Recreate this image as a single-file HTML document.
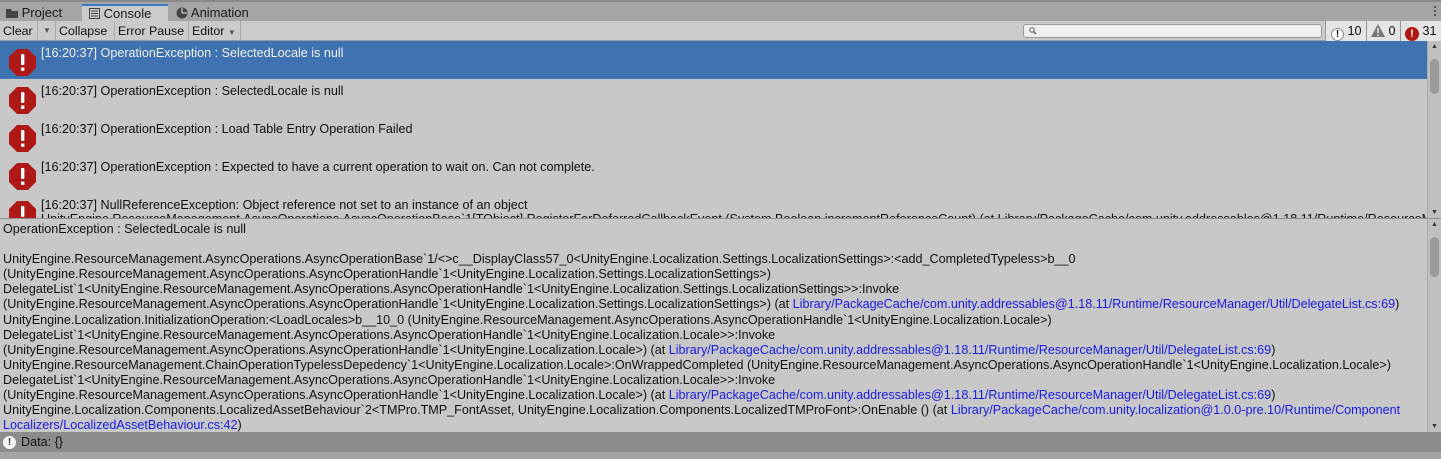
<!DOCTYPE html>
<html><head><style>
*{margin:0;padding:0;box-sizing:border-box}
body{width:1441px;height:459px;overflow:hidden;background:#a5a5a5;font-family:"Liberation Sans",sans-serif;font-size:12.6px;color:#101010;position:relative}
.abs{position:absolute}
.tabs{left:0;top:0;width:1441px;height:21px;background:#a5a5a5;border-top:2px solid #8a8a8a}
.tab{position:absolute;top:2px;height:19px;line-height:18px;font-size:13px;color:#1a1a1a;white-space:nowrap}
.tb{left:0;top:21px;width:1441px;height:20px;background:#cbcbcb;border-bottom:1px solid #999}
.btn{position:absolute;top:0;height:20px;line-height:20px;padding:0 3px;border-right:1px solid #aaa;font-size:12.4px;white-space:nowrap;overflow:hidden}
.list{left:0;top:41px;width:1427px;height:177px;background:#c8c8c8;overflow:hidden}
.row{position:absolute;left:0;width:1427px;height:38px;white-space:nowrap}
.row span{position:absolute;left:41px;top:5px}
.ic{position:absolute;left:9px;top:8px;width:27px;height:27px}
.det{left:0;top:219px;width:1427px;height:213px;background:#c8c8c8;overflow:hidden;white-space:nowrap;line-height:15.1px;padding:3px 0 0 3px}
a{color:#1a1ae8;text-decoration:none}
.sb{background:#c0c0c0;border-left:1px solid #aaa}
</style></head><body>
<div class="abs tabs">
 <div class="tab" style="left:0;width:82px;padding-left:6px"><svg width="12" height="10" style="vertical-align:-1px"><path d="M0 1h5l1 2h6v7H0z" fill="#444"/></svg> Project</div>
 <div class="tab" style="left:82px;width:86px;background:#cbcbcb;border-top:2px solid #3a79c8;top:2px;padding-left:7px;line-height:16px"><svg width="11" height="11" style="vertical-align:-1px"><rect x="0.5" y="0.5" width="10" height="10" fill="none" stroke="#444"/><path d="M2 3h7M2 5.5h7M2 8h7" stroke="#444"/></svg> Console</div>
 <div class="tab" style="left:176px;padding-left:0"><svg width="12" height="12" style="vertical-align:-2px"><circle cx="6" cy="6" r="5.5" fill="#444"/><path d="M6 6V1M6 6h5" stroke="#ccc" stroke-width="1.2"/></svg> Animation</div>
 <div class="abs" style="right:5px;top:4px;width:2px;height:10px;background:repeating-linear-gradient(#555 0 2px,transparent 2px 4px)"></div>
</div>
<div class="abs tb">
 <div class="btn" style="left:0;width:38px">Clear</div>
 <div class="btn" style="left:38px;width:18px;font-size:8px;color:#555;padding-left:5px">▼</div>
 <div class="btn" style="left:56px;width:59px">Collapse</div>
 <div class="btn" style="left:115px;width:74px">Error Pause</div>
 <div class="btn" style="left:189px;width:52px">Editor <span style="font-size:8px;color:#555">▼</span></div>
 <div class="abs" style="left:1023px;top:3px;width:299px;height:14px;background:#efefef;border:1px solid #999;border-radius:3px"><svg width="8" height="8" style="position:absolute;left:5px;top:2px"><circle cx="3" cy="3" r="2.2" fill="none" stroke="#555"/><path d="M4.5 4.5L7 7" stroke="#555" stroke-width="1.3"/></svg></div>
 <div class="abs" style="left:1325px;top:0;width:41px;height:20px;background:#e4e4e4;border-left:1px solid #999;line-height:20px;padding-left:5px"><span style="display:inline-block;width:13px;height:13px;border-radius:50%;border:1px solid #888;background:#fff;font-size:10px;text-align:center;line-height:11px;font-weight:bold;vertical-align:-2px">!</span> 10</div>
 <div class="abs" style="left:1366px;top:0;width:34px;height:20px;background:#e4e4e4;border-left:1px solid #999;line-height:20px;padding-left:4px"><svg width="14" height="13" style="vertical-align:-2px"><path d="M7 0L14 13H0z" fill="#777"/><path d="M7 4v5M7 10.5v1.5" stroke="#eee" stroke-width="1.5"/></svg> 0</div>
 <div class="abs" style="left:1400px;top:0;width:41px;height:20px;background:#e4e4e4;border-left:1px solid #999;line-height:20px;padding-left:4px"><span style="display:inline-block;width:14px;height:14px;border-radius:50%;background:#b31515;color:#fff;font-size:11px;text-align:center;line-height:14px;font-weight:bold;vertical-align:-2px">!</span> 31</div>
</div>
<svg width="0" height="0" style="position:absolute"><defs><g id="e"><polygon points="8,0 19,0 27,8 27,19 19,27 8,27 0,19 0,8" fill="#b01717"/><rect x="12" y="5" width="3.4" height="11" rx="1" fill="#fff"/><rect x="12" y="18.5" width="3.4" height="3.4" fill="#fff"/></g></defs></svg>
<div class="abs list">
 <div class="row" style="top:0;background:#3e72b0;color:#f0f0f0"><svg class="ic"><use href="#e"/></svg><span>[16:20:37] OperationException : SelectedLocale is null</span></div>
 <div class="row" style="top:38px"><svg class="ic"><use href="#e"/></svg><span>[16:20:37] OperationException : SelectedLocale is null</span></div>
 <div class="row" style="top:76px"><svg class="ic"><use href="#e"/></svg><span>[16:20:37] OperationException : Load Table Entry Operation Failed</span></div>
 <div class="row" style="top:114px"><svg class="ic"><use href="#e"/></svg><span>[16:20:37] OperationException : Expected to have a current operation to wait on. Can not complete.</span></div>
 <div class="row" style="top:152px"><svg class="ic"><use href="#e"/></svg><span>[16:20:37] NullReferenceException: Object reference not set to an instance of an object<br>UnityEngine.ResourceManagement.AsyncOperations.AsyncOperationBase`1[TObject].RegisterForDeferredCallbackEvent (System.Boolean incrementReferenceCount) (at Library/PackageCache/com.unity.addressables@1.18.11/Runtime/ResourceManager</span></div>
</div>
<div class="abs sb" style="left:1427px;top:41px;width:14px;height:177px"><div style="position:absolute;left:2px;top:18px;width:9px;height:35px;border-radius:5px;background:#9a9a9a"></div><div style="position:absolute;left:3px;top:2px;font-size:7px;color:#333">▲</div><div style="position:absolute;left:3px;bottom:2px;font-size:7px;color:#333">▼</div></div>
<div class="abs" style="left:0;top:218px;width:1441px;height:1px;background:#8e8e8e"></div>
<div class="abs det">OperationException : SelectedLocale is null<br><br>
UnityEngine.ResourceManagement.AsyncOperations.AsyncOperationBase`1/&lt;&gt;c__DisplayClass57_0&lt;UnityEngine.Localization.Settings.LocalizationSettings&gt;:&lt;add_CompletedTypeless&gt;b__0<br>
(UnityEngine.ResourceManagement.AsyncOperations.AsyncOperationHandle`1&lt;UnityEngine.Localization.Settings.LocalizationSettings&gt;)<br>
DelegateList`1&lt;UnityEngine.ResourceManagement.AsyncOperations.AsyncOperationHandle`1&lt;UnityEngine.Localization.Settings.LocalizationSettings&gt;&gt;:Invoke<br>
(UnityEngine.ResourceManagement.AsyncOperations.AsyncOperationHandle`1&lt;UnityEngine.Localization.Settings.LocalizationSettings&gt;) (at <a>Library/PackageCache/com.unity.addressables@1.18.11/Runtime/ResourceManager/Util/DelegateList.cs:69</a>)<br>
UnityEngine.Localization.InitializationOperation:&lt;LoadLocales&gt;b__10_0 (UnityEngine.ResourceManagement.AsyncOperations.AsyncOperationHandle`1&lt;UnityEngine.Localization.Locale&gt;)<br>
DelegateList`1&lt;UnityEngine.ResourceManagement.AsyncOperations.AsyncOperationHandle`1&lt;UnityEngine.Localization.Locale&gt;&gt;:Invoke<br>
(UnityEngine.ResourceManagement.AsyncOperations.AsyncOperationHandle`1&lt;UnityEngine.Localization.Locale&gt;) (at <a>Library/PackageCache/com.unity.addressables@1.18.11/Runtime/ResourceManager/Util/DelegateList.cs:69</a>)<br>
UnityEngine.ResourceManagement.ChainOperationTypelessDepedency`1&lt;UnityEngine.Localization.Locale&gt;:OnWrappedCompleted (UnityEngine.ResourceManagement.AsyncOperations.AsyncOperationHandle`1&lt;UnityEngine.Localization.Locale&gt;)<br>
DelegateList`1&lt;UnityEngine.ResourceManagement.AsyncOperations.AsyncOperationHandle`1&lt;UnityEngine.Localization.Locale&gt;&gt;:Invoke<br>
(UnityEngine.ResourceManagement.AsyncOperations.AsyncOperationHandle`1&lt;UnityEngine.Localization.Locale&gt;) (at <a>Library/PackageCache/com.unity.addressables@1.18.11/Runtime/ResourceManager/Util/DelegateList.cs:69</a>)<br>
UnityEngine.Localization.Components.LocalizedAssetBehaviour`2&lt;TMPro.TMP_FontAsset, UnityEngine.Localization.Components.LocalizedTMProFont&gt;:OnEnable () (at <a>Library/PackageCache/com.unity.localization@1.0.0-pre.10/Runtime/Component</a><br>
<a>Localizers/LocalizedAssetBehaviour.cs:42</a>)</div>
<div class="abs sb" style="left:1427px;top:219px;width:14px;height:213px"><div style="position:absolute;left:2px;top:18px;width:9px;height:40px;border-radius:5px;background:#9a9a9a"></div><div style="position:absolute;left:3px;top:2px;font-size:7px;color:#333">▲</div><div style="position:absolute;left:3px;bottom:2px;font-size:7px;color:#333">▼</div></div>
<div class="abs" style="left:0;top:432px;width:1441px;height:20px;background:#8c8c8c;line-height:20px;padding-left:21px;color:#111">Data: {}</div>
<div class="abs" style="left:3px;top:436px;width:13px;height:13px;border-radius:50%;background:#f4f4f4;font-size:10px;font-weight:bold;text-align:center;line-height:13px;color:#333">!</div>
<div class="abs" style="left:0;top:452px;width:1441px;height:7px;background:#a5a5a5"></div>
</body></html>
